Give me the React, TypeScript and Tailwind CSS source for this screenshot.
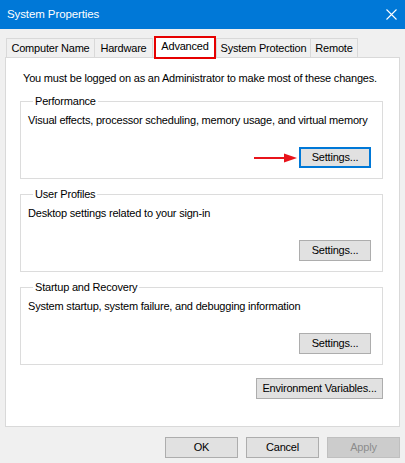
import React from "react";

const font = "font-['Liberation_Sans',Arial,sans-serif]";

function Btn({ children, w, focused, disabled }: { children: React.ReactNode; w: string; focused?: boolean; disabled?: boolean }) {
  const base = "h-[21px] flex items-center justify-center text-[11px] tracking-[-0.2px] leading-none";
  if (focused)
    return <div className={`${base} ${w} bg-[#e1e1e1] border-2 border-[#0078d7] text-black`}>{children}</div>;
  if (disabled)
    return <div className={`${base} ${w} bg-[#cccccc] border border-[#bfbfbf] text-[#8c8c8c]`}>{children}</div>;
  return <div className={`${base} ${w} bg-[#e1e1e1] border border-[#adadad] text-black`}>{children}</div>;
}

function Group({ title, desc, focused, arrow, mt }: { title: string; desc: string; focused?: boolean; arrow?: boolean; mt: string }) {
  return (
    <fieldset className={`${mt} ml-[14px] w-[363px] border border-[#dcdcdc] pl-[7px] pr-[11px] pb-[10px]`}>
      <legend className="ml-[5px] px-[2px] leading-[15px] text-[11px] tracking-[-0.2px]">{title}</legend>
      <div className="mt-[4px] leading-[15px] text-[11px] tracking-[-0.2px]">{desc}</div>
      <div className="mt-[19px] flex justify-end items-center">
        {arrow && (
          <svg width="43" height="10" viewBox="0 0 43 10" className="mr-[2px]">
            <rect x="0" y="4" width="33" height="2" fill="#e8141b" />
            <polygon points="30,0.5 43,5 30,9.5" fill="#e8141b" />
          </svg>
        )}
        <Btn w="w-[72px]" focused={focused}>Settings...</Btn>
      </div>
    </fieldset>
  );
}

export default function App() {
  const tab = "h-[19px] mt-[2px] flex items-center justify-center pt-[1px] border border-b-0 border-[#d9d9d9] bg-[#f0f0f0] text-[11px] tracking-[-0.2px] text-black";
  return (
    <div className={`${font} w-[405px] h-[463px] bg-[#f0f0f0] flex flex-col overflow-hidden text-black`}>
      <div className="h-[29px] bg-[#0078d7] flex items-center justify-between pl-[7px] pr-[8px] shrink-0">
        <span className="text-white text-[11.5px] tracking-[-0.1px]">System Properties</span>
        <svg width="11" height="11" viewBox="0 0 11 11">
          <path d="M0.5 0.5 L10.5 10.5 M10.5 0.5 L0.5 10.5" stroke="#ffffff" strokeWidth="1.1" />
        </svg>
      </div>

      <div className="px-[5px] flex flex-col">
        <div className="mt-[7px] -mb-[2px] ml-[1px] flex items-start relative z-10">
          <div className={`${tab} w-[89px]`}>Computer Name</div>
          <div className={`${tab} w-[59px] -ml-px`}>Hardware</div>
          <div className="ml-[1px] h-[23px] w-[62px] flex items-center justify-center pb-[2px] border-2 border-[#e60000] bg-white text-[11px] tracking-[-0.2px]">Advanced</div>
          <div className={`${tab} w-[95px]`}>System Protection</div>
          <div className={`${tab} w-[48px] -ml-px`}>Remote</div>
        </div>

        <div className="h-[370px] w-[395px] bg-white border border-[#d9d9d9] flex flex-col">
          <div className="pt-[13px] pl-[17px] leading-[15px] text-[11px] tracking-[-0.2px]">
            You must be logged on as an Administrator to make most of these changes.
          </div>
          <Group mt="mt-[8px]" title="Performance" desc="Visual effects, processor scheduling, memory usage, and virtual memory" focused arrow />
          <Group mt="mt-[8px]" title="User Profiles" desc="Desktop settings related to your sign-in" />
          <Group mt="mt-[8px]" title="Startup and Recovery" desc="System startup, system failure, and debugging information" />
          <div className="mt-[13px] flex justify-end pr-[16px]">
            <Btn w="w-[127px]">Environment Variables...</Btn>
          </div>
        </div>

        <div className="mt-[10px] flex justify-end gap-[8px]">
          <Btn w="w-[73px]">OK</Btn>
          <Btn w="w-[73px]">Cancel</Btn>
          <Btn w="w-[73px]" disabled>Apply</Btn>
        </div>
      </div>
    </div>
  );
}
